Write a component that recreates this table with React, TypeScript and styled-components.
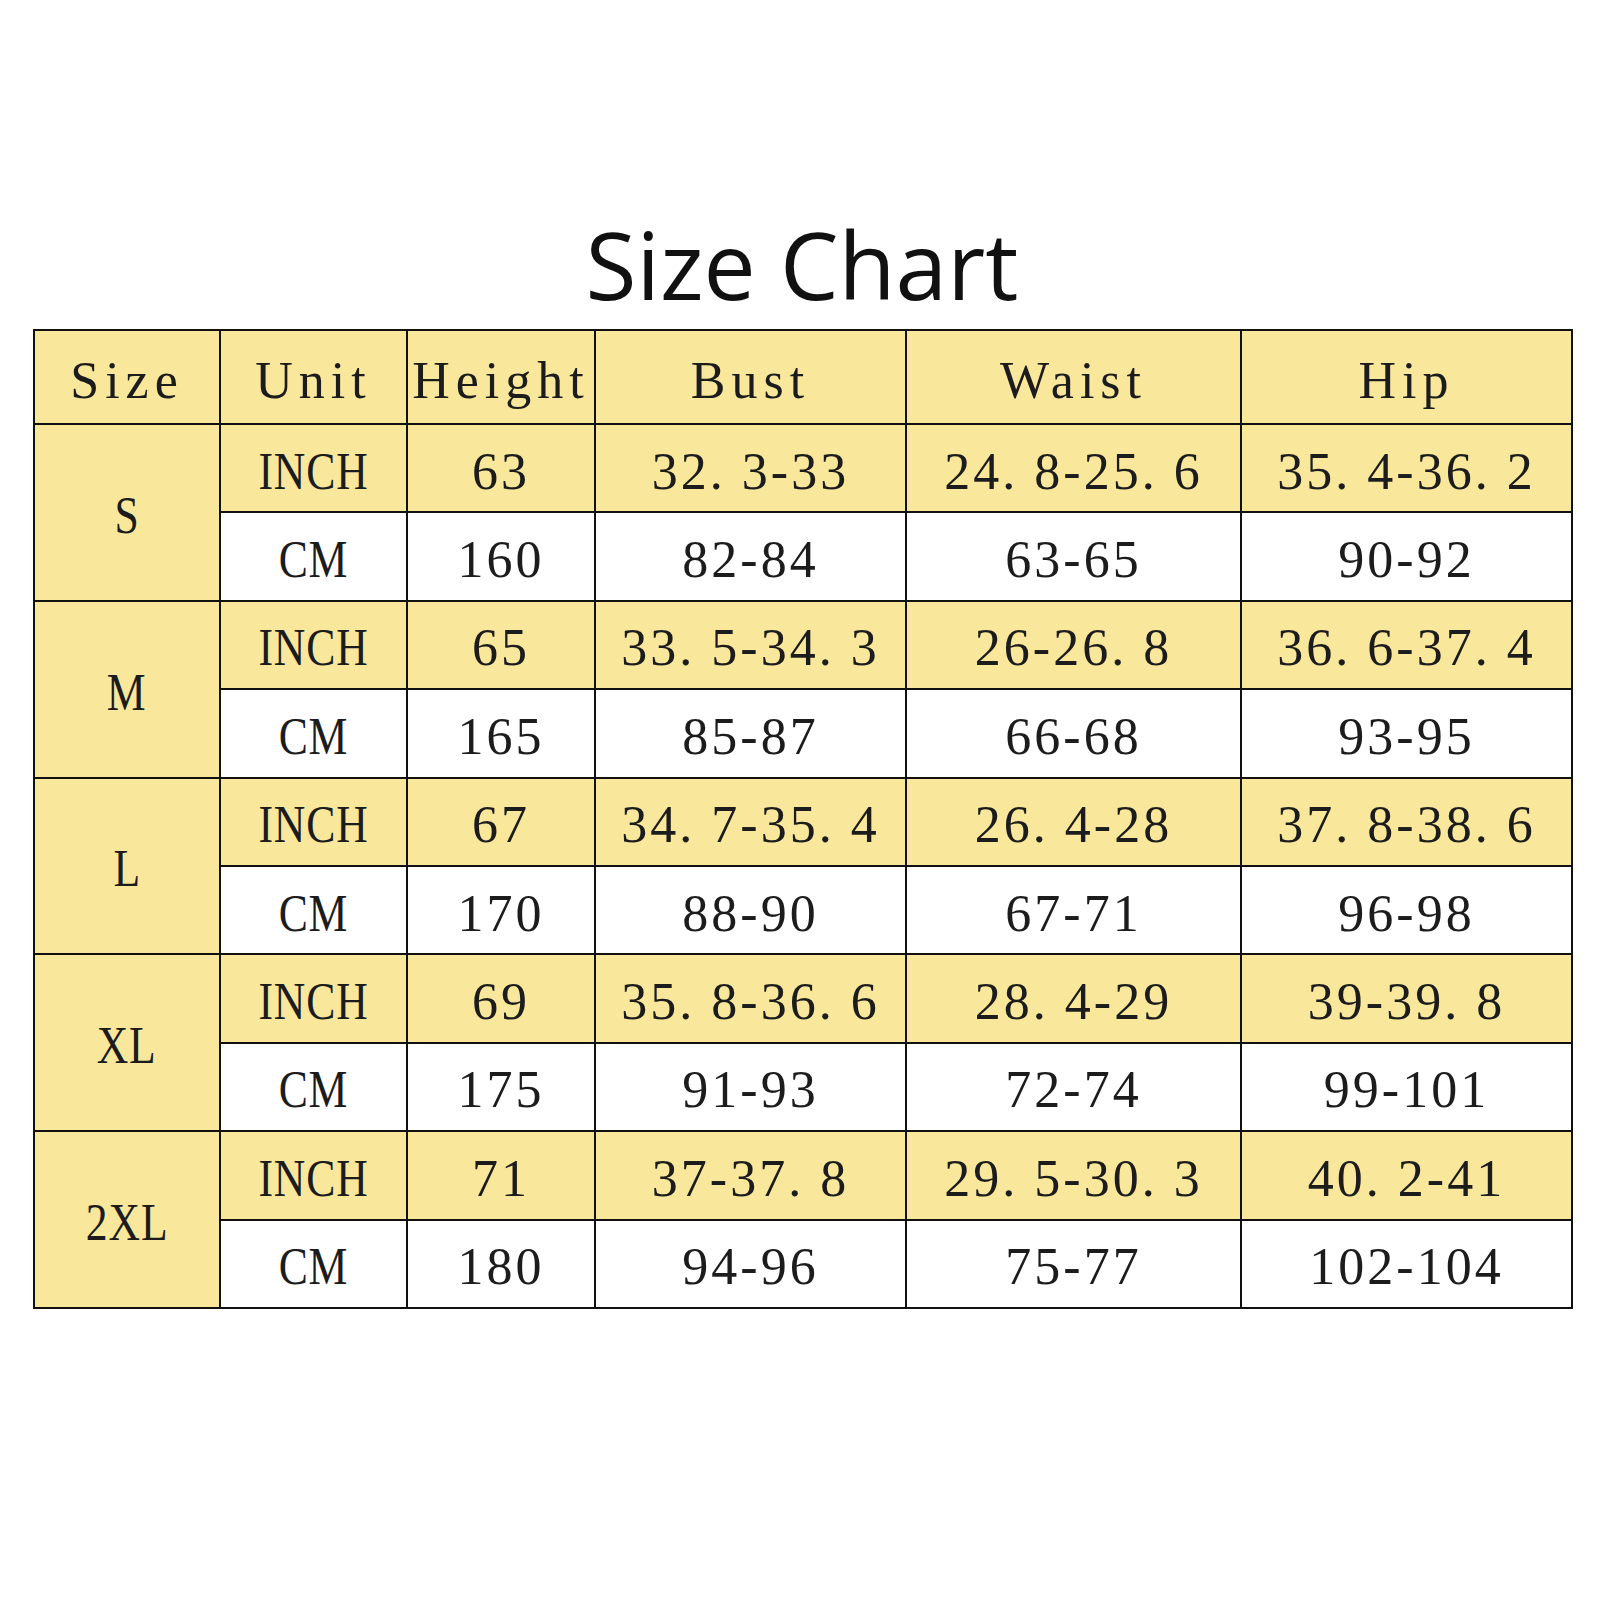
import styled, { createGlobalStyle } from 'styled-components';

const GlobalStyle = createGlobalStyle`
  html, body {
    margin: 0;
    padding: 0;
    background: #fff;
  }
`;

const Page = styled.div`
  width: 1600px;
  height: 1600px;
  padding: 211px 0 0 33px;
  box-sizing: border-box;
  display: flex;
  flex-direction: column;
`;

const Title = styled.h1`
  width: 1538px;
  margin: 0 0 12px;
  text-align: center;
  font-family: 'Open Sans', 'Noto Sans', sans-serif;
  font-weight: 400;
  font-size: 93px;
  line-height: 106px;
  color: #111;
`;

const Table = styled.table`
  border-collapse: collapse;
  table-layout: fixed;
  width: 1538px;
  font-family: 'Liberation Serif', 'DejaVu Serif', serif;
  color: #1c1c1c;
`;

const Cell = styled.td<{ $yellow?: boolean; $head?: boolean }>`
  border: 2px solid #111;
  background: ${(p) => (p.$yellow ? '#f9e89c' : '#fff')};
  height: ${(p) => (p.$head ? '86px' : '80.4px')};
  padding: 6px 0 0;
  text-align: center;
  font-size: 52px;
  font-weight: 400;
  letter-spacing: ${(p) => (p.$head ? '6px' : '3px')};
  white-space: nowrap;
  overflow: hidden;
`;

// unit labels are set narrow, like the monospaced face of the original chart
const Narrow = styled.span`
  display: inline-block;
  transform: scaleX(0.84);
  letter-spacing: 1px;
`;

const cols = [186, 187, 188, 311, 335, 331];
const headers = ['Size', 'Unit', 'Height', 'Bust', 'Waist', 'Hip'];

interface SizeRow {
  size: string;
  inch: string[];
  cm: string[];
}

const rows: SizeRow[] = [
  { size: 'S', inch: ['63', '32. 3-33', '24. 8-25. 6', '35. 4-36. 2'], cm: ['160', '82-84', '63-65', '90-92'] },
  { size: 'M', inch: ['65', '33. 5-34. 3', '26-26. 8', '36. 6-37. 4'], cm: ['165', '85-87', '66-68', '93-95'] },
  { size: 'L', inch: ['67', '34. 7-35. 4', '26. 4-28', '37. 8-38. 6'], cm: ['170', '88-90', '67-71', '96-98'] },
  { size: 'XL', inch: ['69', '35. 8-36. 6', '28. 4-29', '39-39. 8'], cm: ['175', '91-93', '72-74', '99-101'] },
  { size: '2XL', inch: ['71', '37-37. 8', '29. 5-30. 3', '40. 2-41'], cm: ['180', '94-96', '75-77', '102-104'] },
];

export default function App() {
  return (
    <>
      <GlobalStyle />
      <Page>
        <Title>Size Chart</Title>
        <Table>
          <colgroup>
            {cols.map((w, i) => (
              <col key={i} style={{ width: w }} />
            ))}
          </colgroup>
          <thead>
            <tr>
              {headers.map((h) => (
                <Cell as="th" key={h} $yellow $head>
                  {h}
                </Cell>
              ))}
            </tr>
          </thead>
          <tbody>
            {rows.map((r) => [
              <tr key={r.size + 'i'}>
                <Cell rowSpan={2} $yellow>
                  <Narrow>{r.size}</Narrow>
                </Cell>
                <Cell $yellow>
                  <Narrow>INCH</Narrow>
                </Cell>
                {r.inch.map((v, i) => (
                  <Cell key={i} $yellow>
                    {v}
                  </Cell>
                ))}
              </tr>,
              <tr key={r.size + 'c'}>
                <Cell>
                  <Narrow>CM</Narrow>
                </Cell>
                {r.cm.map((v, i) => (
                  <Cell key={i}>{v}</Cell>
                ))}
              </tr>,
            ])}
          </tbody>
        </Table>
      </Page>
    </>
  );
}
